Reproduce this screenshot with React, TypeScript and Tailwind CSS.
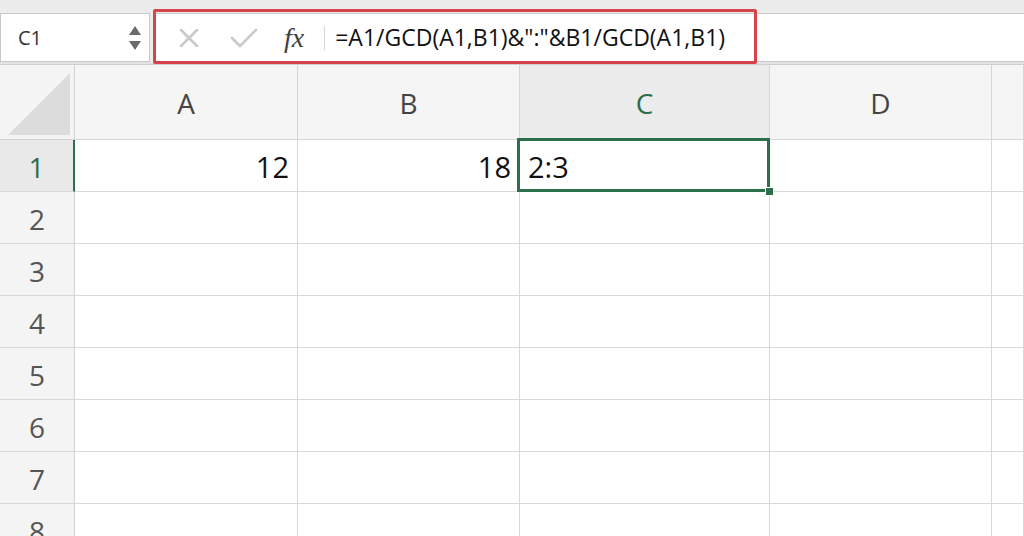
import React from "react";

const COLS = [
  { key: "A", w: "w-[223px]" },
  { key: "B", w: "w-[222px]" },
  { key: "C", w: "w-[250px]" },
  { key: "D", w: "w-[222px]" },
  { key: "E", w: "flex-1" },
];

const DATA: Record<string, { v: string; align: "left" | "right" }> = {
  A1: { v: "12", align: "right" },
  B1: { v: "18", align: "right" },
  C1: { v: "2:3", align: "left" },
};

function NameBox() {
  return (
    <div className="w-[150px] h-full bg-white border border-[#c9c9c9] flex items-center pl-[17px] pr-[8px] shrink-0">
      <span className="text-[20px] text-[#333] leading-none">C1</span>
      <div className="ml-auto flex flex-col items-center gap-[6px]">
        <svg width="12" height="9" viewBox="0 0 12 9"><path d="M6 0 L12 9 L0 9 Z" fill="#6b6b6b" /></svg>
        <svg width="12" height="9" viewBox="0 0 12 9"><path d="M0 0 L12 0 L6 9 Z" fill="#6b6b6b" /></svg>
      </div>
    </div>
  );
}

function FormulaBar() {
  return (
    <div className="relative flex-1 h-full bg-white border-y border-[#c9c9c9] flex items-center ml-[3px]">
      <div className="absolute left-0 right-[267px] top-[-5px] bottom-[-3px] border-[3px] border-[#d8434b] rounded-[2px] pointer-events-none" />
      <div className="flex items-center pl-[25px]">
        <svg width="22" height="18" viewBox="0 0 22 18" className="mt-[1px]">
          <path d="M3 1 L19 17 M19 1 L3 17" stroke="#c9c9c9" strokeWidth="2.6" strokeLinecap="round" />
        </svg>
        <svg width="28" height="20" viewBox="0 0 28 20" className="ml-[30px]">
          <path d="M2 10 L10 18 L26 2" stroke="#c9c9c9" strokeWidth="2.6" fill="none" strokeLinecap="round" strokeLinejoin="round" />
        </svg>
        <span className="ml-[26px] font-['Liberation_Serif',serif] italic text-[28px] text-[#3f3f3f] leading-none">fx</span>
        <div className="ml-[20px] w-px h-[24px] bg-[#d6d6d6]" />
        <span className="ml-[10px] text-[23px] text-[#111] leading-none">
          =A1/GCD(A1,B1)&amp;":"&amp;B1/GCD(A1,B1)
        </span>
      </div>
    </div>
  );
}

function HeaderRow() {
  return (
    <div className="flex h-[75px] shrink-0">
      <div className="w-[75px] shrink-0 bg-[#f4f4f4] border-r border-b border-[#d3d3d3] flex items-end justify-end p-[4px]">
        <svg width="62" height="62" viewBox="0 0 62 62"><path d="M62 0 L62 62 L0 62 Z" fill="#dcdcdc" /></svg>
      </div>
      {COLS.map((c) => (
        <div
          key={c.key}
          className={`${c.w} shrink-0 border-r border-b border-[#d6d6d6] flex items-center justify-center ${
            c.key === "C" ? "bg-[#ececec]" : "bg-[#f5f5f5]"
          }`}
        >
          <span className={`text-[28px] leading-none pt-[2px] ${c.key === "C" ? "text-[#2d6e4c]" : "text-[#444]"}`}>
            {c.key === "E" ? "" : c.key}
          </span>
        </div>
      ))}
    </div>
  );
}

function Row({ n }: { n: number }) {
  const sel = n === 1;
  return (
    <div className="flex h-[52px] shrink-0">
      <div
        className={`w-[75px] shrink-0 border-b border-[#d6d6d6] flex items-center justify-center relative ${
          sel ? "bg-[#e9e9e9] border-r-[2px] border-r-[#2d6e4c]" : "bg-[#f4f4f4] border-r border-r-[#d3d3d3]"
        }`}
      >
        <span className={`text-[28px] leading-none pt-[2px] ${sel ? "text-[#2d6e4c]" : "text-[#555]"}`}>{n}</span>
      </div>
      {COLS.map((c) => {
        const d = DATA[`${c.key}${n}`];
        const isSel = c.key === "C" && n === 1;
        return (
          <div
            key={c.key}
            className={`${c.w} shrink-0 border-r border-b border-[#d9d9d9] bg-white flex items-center relative ${
              d?.align === "right" ? "justify-end pr-[8px]" : "justify-start pl-[8px]"
            } ${isSel ? "z-10" : ""}`}
          >
            {d && <span className="text-[29px] text-[#111] leading-none pt-[2px]">{d.v}</span>}
            {isSel && (
              <>
                <div className="absolute left-[-3px] top-[-2px] right-[-1px] bottom-[-1px] border-[3px] border-[#2d6e4c] pointer-events-none" />
                <div className="absolute right-[-5px] bottom-[-5px] w-[9px] h-[9px] bg-[#2d6e4c] border border-white" />
              </>
            )}
          </div>
        );
      })}
    </div>
  );
}

export default function App() {
  return (
    <div className="w-[1024px] h-[536px] overflow-hidden bg-[#ececec] font-['Open_Sans',sans-serif] flex flex-col">
      <div className="h-[13px] shrink-0 bg-[#ececec]" />
      <div className="h-[49px] shrink-0 flex bg-[#ececec]">
        <NameBox />
        <FormulaBar />
      </div>
      <div className="h-[3px] shrink-0 bg-[#e3e3e3] border-b border-[#cfcfcf]" />
      <HeaderRow />
      {[1, 2, 3, 4, 5, 6, 7, 8].map((n) => (
        <Row key={n} n={n} />
      ))}
    </div>
  );
}
